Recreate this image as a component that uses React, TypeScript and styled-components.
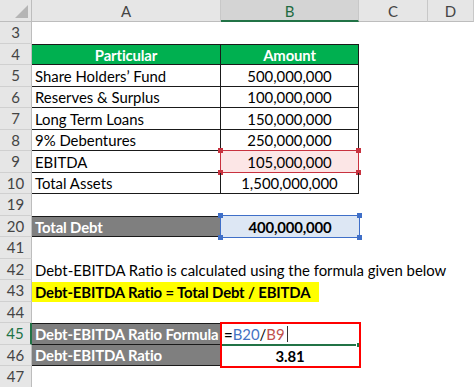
import styled, { createGlobalStyle } from "styled-components";

const GlobalStyle = createGlobalStyle`
  html, body { margin: 0; padding: 0; background: #ffffff; }
  body { font-family: Lato, "Liberation Sans", sans-serif; }
  * { box-sizing: border-box; }
`;

const COLS = "32px 189px 138px 69px 46px";

const Sheet = styled.div`
  width: 474px;
  height: 387px;
  overflow: hidden;
  display: flex;
  flex-direction: column;
  font-size: 14.9px;
  color: #000;
  background: #fff;
`;

const HeaderRow = styled.div`
  display: grid;
  grid-template-columns: ${COLS};
  height: 22px;
  flex: none;
`;

const Row = styled.div`
  display: grid;
  grid-template-columns: ${COLS};
  height: 21.5px;
  flex: none;
`;

const Corner = styled.div`
  background: #e6e6e6;
  border-right: 1px solid #bdbdbd;
  border-bottom: 1px solid #bdbdbd;
  display: flex;
  align-items: flex-end;
  justify-content: flex-end;
  padding: 0 3px 3px 0;
`;

const ColHead = styled.div<{ $selected?: boolean }>`
  background: ${(p) => (p.$selected ? "#d4d4d4" : "#e6e6e6")};
  color: ${(p) => (p.$selected ? "#1e6b41" : "#444")};
  border-right: 1px solid #c8c8c8;
  border-bottom: ${(p) => (p.$selected ? "2px solid #217346" : "1px solid #bdbdbd")};
  display: flex;
  align-items: center;
  justify-content: center;
  font-size: 15px;
  padding-top: 1px;
`;

const RowHead = styled.div<{ $selected?: boolean }>`
  background: #e6e6e6;
  color: ${(p) => (p.$selected ? "#217346" : "#444")};
  border-right: ${(p) => (p.$selected ? "2px solid #217346" : "1px solid #bdbdbd")};
  border-bottom: 1px solid #d0d0d0;
  display: flex;
  align-items: center;
  justify-content: center;
  font-size: 15px;
`;

const Cell = styled.div<{
  $fill?: string;
  $bold?: boolean;
  $color?: string;
  $align?: "left" | "center";
  $boxed?: boolean;
  $top?: boolean;
  $span?: number;
}>`
  position: relative;
  background: ${(p) => p.$fill || "transparent"};
  color: ${(p) => p.$color || "#000"};
  font-weight: ${(p) => (p.$bold ? 700 : 400)};
  letter-spacing: ${(p) => (p.$bold ? "-0.15px" : "0")};
  display: flex;
  align-items: center;
  justify-content: ${(p) => (p.$align === "center" ? "center" : "flex-start")};
  padding: 1px 3px 0 3px;
  white-space: nowrap;
  grid-column: ${(p) => (p.$span ? `span ${p.$span}` : "auto")};
  border-right: ${(p) => (p.$boxed ? "1px solid #1a1a1a" : "none")};
  border-bottom: ${(p) => (p.$boxed ? "1px solid #1a1a1a" : "none")};
  border-top: ${(p) => (p.$top ? "1px solid #1a1a1a" : "none")};
`;

const RefBox = styled.div<{ $color: string }>`
  position: absolute;
  inset: -1px -1px -1px -1px;
  border: 1.5px solid ${(p) => p.$color};
  pointer-events: none;
`;

const Handle = styled.span<{ $color: string; $x: "left" | "right"; $y: "top" | "bottom" }>`
  position: absolute;
  width: 5px;
  height: 5px;
  background: ${(p) => p.$color};
  ${(p) => (p.$x === "left" ? "left: -3px;" : "right: -3px;")}
  ${(p) => (p.$y === "top" ? "top: -3px;" : "bottom: -3px;")}
`;

const Highlight = styled.span`
  background: #ffff00;
  font-weight: 700;
  letter-spacing: -0.15px;
  align-self: stretch;
  display: flex;
  align-items: center;
  padding: 1px 9px 0 3px;
  margin: 1px 0 0 -3px;
`;

const EditLine = styled.div`
  position: absolute;
  left: 0;
  right: 3px;
  bottom: -1px;
  height: 2px;
  background: #217346;
`;

const EditDot = styled.span`
  position: absolute;
  right: -2px;
  bottom: -2px;
  width: 4px;
  height: 4px;
  background: #217346;
`;

const Caret = styled.span`
  display: inline-block;
  width: 1px;
  height: 16px;
  background: #333;
  margin-left: 2px;
`;

const Outline = styled.div`
  position: absolute;
  left: -1px;
  top: -1px;
  width: 141px;
  height: 46px;
  border: 2px solid #ff0000;
  pointer-events: none;
  z-index: 2;
`;

const Equals = styled.span`font-weight: 700;`;
const RefBlue = styled.span`color: #4472c4;`;
const RefRed = styled.span`color: #c0504d;`;

const Ref = ({ color }: { color: string }) => (
  <RefBox $color={color}>
    <Handle $color={color} $x="left" $y="top" />
    <Handle $color={color} $x="left" $y="bottom" />
    <Handle $color={color} $x="right" $y="top" />
    <Handle $color={color} $x="right" $y="bottom" />
  </RefBox>
);

const Blank = () => (
  <>
    <Cell />
    <Cell />
    <Cell />
    <Cell />
  </>
);

const tableRows = [
  { n: 5, label: "Share Holders’ Fund", amount: "500,000,000" },
  { n: 6, label: "Reserves & Surplus", amount: "100,000,000" },
  { n: 7, label: "Long Term Loans", amount: "150,000,000" },
  { n: 8, label: "9% Debentures", amount: "250,000,000" },
  { n: 9, label: "EBITDA", amount: "105,000,000", ref: true },
  { n: 10, label: "Total Assets", amount: "1,500,000,000" },
];

const GREY = "#7f7f7f";

export default function App() {
  return (
    <>
      <GlobalStyle />
      <Sheet>
        <HeaderRow>
          <Corner>
            <svg width="13" height="13" viewBox="0 0 13 13">
              <polygon points="13,0 13,13 0,13" fill="#b5b5b5" />
            </svg>
          </Corner>
          <ColHead>A</ColHead>
          <ColHead $selected>B</ColHead>
          <ColHead>C</ColHead>
          <ColHead>D</ColHead>
        </HeaderRow>

        <Row>
          <RowHead>3</RowHead>
          <Blank />
        </Row>

        <Row>
          <RowHead>4</RowHead>
          <Cell $fill="#00b050" $color="#fff" $bold $align="center" $boxed $top>
            Particular
          </Cell>
          <Cell $fill="#00b050" $color="#fff" $bold $align="center" $boxed $top>
            Amount
          </Cell>
          <Cell />
          <Cell />
        </Row>

        {tableRows.map((r) => (
          <Row key={r.n}>
            <RowHead>{r.n}</RowHead>
            <Cell $boxed>{r.label}</Cell>
            <Cell $boxed $align="center" $fill={r.ref ? "#fce6e6" : undefined}>
              {r.amount}
              {r.ref && <Ref color="#c8323f" />}
            </Cell>
            <Cell />
            <Cell />
          </Row>
        ))}

        <Row>
          <RowHead>19</RowHead>
          <Blank />
        </Row>

        <Row>
          <RowHead>20</RowHead>
          <Cell $fill={GREY} $color="#fff" $bold $boxed $top>
            Total Debt
          </Cell>
          <Cell $fill="#dde7f4" $bold $align="center">
            400,000,000
            <Ref color="#3f6fc8" />
          </Cell>
          <Cell />
          <Cell />
        </Row>

        <Row>
          <RowHead>41</RowHead>
          <Blank />
        </Row>

        <Row>
          <RowHead>42</RowHead>
          <Cell $span={4}>Debt-EBITDA Ratio is calculated using the formula given below</Cell>
        </Row>

        <Row>
          <RowHead>43</RowHead>
          <Cell $span={4}>
            <Highlight>Debt-EBITDA Ratio = Total Debt / EBITDA</Highlight>
          </Cell>
        </Row>

        <Row>
          <RowHead>44</RowHead>
          <Blank />
        </Row>

        <Row>
          <RowHead $selected>45</RowHead>
          <Cell $fill={GREY} $color="#fff" $bold $boxed $top>
            Debt-EBITDA Ratio Formula
          </Cell>
          <Cell>
            <Equals>=</Equals>
            <RefBlue>B20</RefBlue>/<RefRed>B9</RefRed>
            <Caret />
            <EditLine />
            <EditDot />
            <Outline />
          </Cell>
          <Cell />
          <Cell />
        </Row>

        <Row>
          <RowHead>46</RowHead>
          <Cell $fill={GREY} $color="#fff" $bold $boxed>
            Debt-EBITDA Ratio
          </Cell>
          <Cell $bold $align="center">
            3.81
          </Cell>
          <Cell />
          <Cell />
        </Row>

        <Row>
          <RowHead>47</RowHead>
          <Blank />
        </Row>
      </Sheet>
    </>
  );
}
